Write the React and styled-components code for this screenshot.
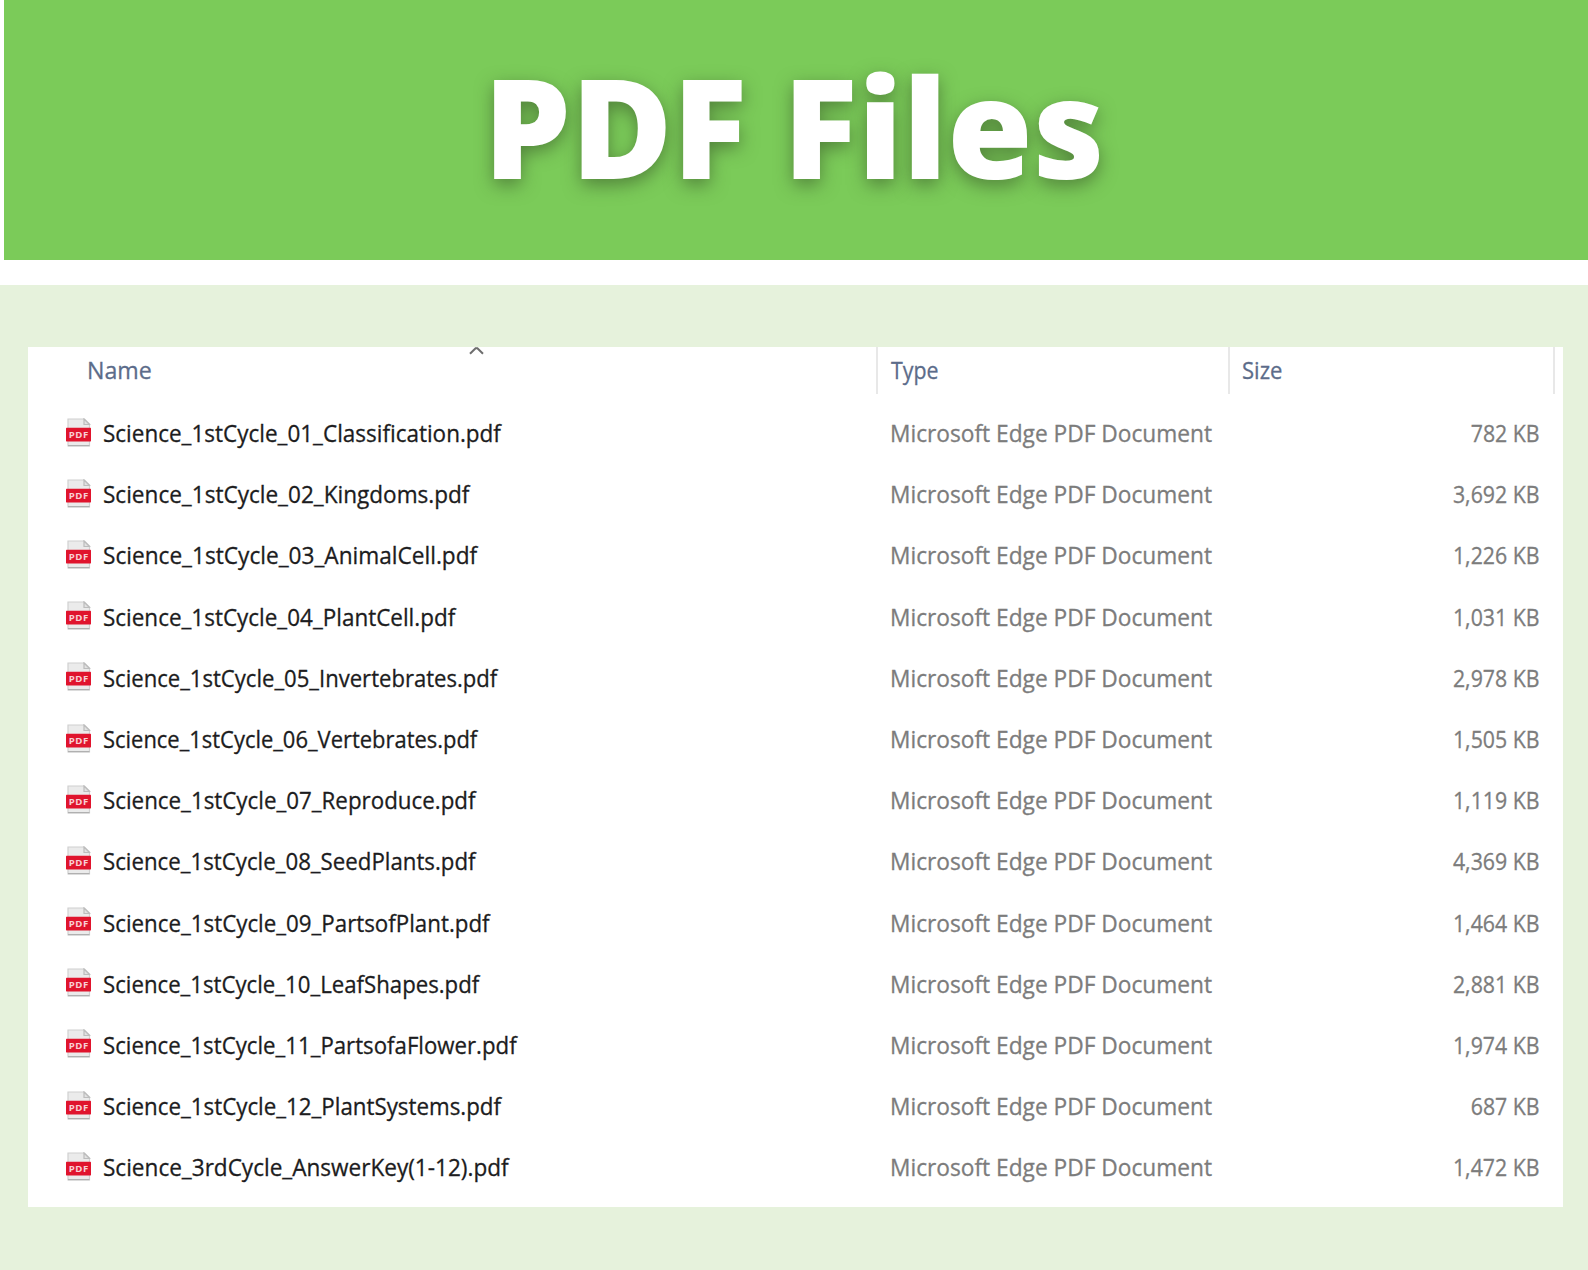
import React from "react";
import styled, { createGlobalStyle } from "styled-components";

const GlobalStyle = createGlobalStyle`
  body {
    margin: 0;
    background-color: #fff;
    font-family: "Open Sans", "Noto Sans", sans-serif;
  }
`;
const Page = styled.div`
  display: flex;
  flex-direction: column;
  width: 1588px;
  height: 1270px;
  overflow: hidden;
`;
const Banner = styled.header`
  display: flex;
  justify-content: center;
  box-sizing: border-box;
  height: 260px;
  margin-left: 4px;
  padding: 56px 4px 0 0;
  background-color: #7bcb59;
`;
const Title = styled.h1`
  margin: 0;
  color: #fff;
  font-size: 138.4px;
  font-weight: 800;
  line-height: 139px;
  white-space: nowrap;
  text-shadow: 0 6px 18px rgba(50, 75, 35, 0.56);
`;
const Content = styled.main`
  flex: 1;
  margin-top: 25px;
  padding: 62px 25px 0 28px;
  background-color: #e6f2dc;
`;
const Panel = styled.section`
  box-sizing: border-box;
  height: 860px;
  background-color: #fff;
`;
const Columns = styled.div`
  display: grid;
  grid-template-columns: 850px 352px 325px;
  height: 47px;
  margin-bottom: 8px;
`;
const Column = styled.div`
  display: flex;
  position: relative;
  box-sizing: border-box;
  padding: 6px 0 0 ${(p) => p.$indent}px;
  border-right: 2px solid #e8e8e8;
  color: #5c6c8a;
  font-size: 24px;
  line-height: 33px;
`;
const SortArrow = styled.svg`
  position: absolute;
  left: 440px;
  top: 0;
`;
const Row = styled.div`
  display: grid;
  grid-template-columns: 75px 787px 360.5px 289px;
  align-items: center;
  height: 61.2px;
  font-size: 24px;
  line-height: 33px;
`;
const Icon = styled.svg`
  display: block;
  margin: 0 0 1px 37px;
`;
const Text = styled.span`
  justify-self: ${(p) => (p.$right ? "end" : "start")};
  color: ${(p) => p.$color || "inherit"};
  white-space: nowrap;
  -webkit-text-stroke: 0.3px currentColor;
  transform: scaleX(${(p) => p.$stretch});
  transform-origin: ${(p) => (p.$right ? "right" : "left")};
`;

const files = [
  { name: "Science_1stCycle_01_Classification.pdf", size: "782 KB", stretch: 0.937 },
  { name: "Science_1stCycle_02_Kingdoms.pdf", size: "3,692 KB", stretch: 0.94 },
  { name: "Science_1stCycle_03_AnimalCell.pdf", size: "1,226 KB", stretch: 0.943 },
  { name: "Science_1stCycle_04_PlantCell.pdf", size: "1,031 KB", stretch: 0.936 },
  { name: "Science_1stCycle_05_Invertebrates.pdf", size: "2,978 KB", stretch: 0.92 },
  { name: "Science_1stCycle_06_Vertebrates.pdf", size: "1,505 KB", stretch: 0.914 },
  { name: "Science_1stCycle_07_Reproduce.pdf", size: "1,119 KB", stretch: 0.931 },
  { name: "Science_1stCycle_08_SeedPlants.pdf", size: "4,369 KB", stretch: 0.927 },
  { name: "Science_1stCycle_09_PartsofPlant.pdf", size: "1,464 KB", stretch: 0.93 },
  { name: "Science_1stCycle_10_LeafShapes.pdf", size: "2,881 KB", stretch: 0.925 },
  { name: "Science_1stCycle_11_PartsofaFlower.pdf", size: "1,974 KB", stretch: 0.926 },
  { name: "Science_1stCycle_12_PlantSystems.pdf", size: "687 KB", stretch: 0.93 },
  { name: "Science_3rdCycle_AnswerKey(1-12).pdf", size: "1,472 KB", stretch: 0.94 },
];

const PdfIcon = () => (
  <Icon width="27" height="29" viewBox="0 0 27 29">
    <path d="M3 1H19.5L24.5 6V28H3Z" fill="#ebebeb" stroke="#d0d0d0" strokeWidth="1.2" />
    <path d="M19 1V6.5H24.5Z" fill="#e2e2e2" stroke="#bcbcbc" strokeWidth="1.2" />
    <path d="M3 27.6H24.5" stroke="#b0b0b0" strokeWidth="1.2" />
    <rect x="1" y="9.8" width="25" height="13.6" rx="0.6" fill="#e0142d" />
    <text
      x="13.5"
      y="20"
      fill="#fff"
      fontSize="9.6"
      fontWeight="700"
      textAnchor="middle"
      textLength="19.5"
      opacity="0.8"
    >
      PDF
    </text>
  </Icon>
);

const App = () => {
  return (
    <Page>
      <GlobalStyle />
      <Banner>
        <Title>PDF Files</Title>
      </Banner>
      <Content>
        <Panel>
          <Columns>
            <Column $indent={58.5}>
              <Text $stretch={0.965}>Name</Text>
              <SortArrow width="18" height="8" viewBox="0 0 18 8">
                <path d="M2 6.8L7.6 1.2H9.4L15 6.8" fill="none" stroke="#6e6e6e" strokeWidth="2" />
              </SortArrow>
            </Column>
            <Column $indent={12.5}>
              <Text $stretch={0.89}>Type</Text>
            </Column>
            <Column $indent={11.5}>
              <Text $stretch={0.92}>Size</Text>
            </Column>
          </Columns>
          {files.map((file) => (
            <Row key={file.name}>
              <PdfIcon />
              <Text $stretch={file.stretch} $color="#1c1c20">{file.name}</Text>
              <Text $stretch={0.946} $color="#7c7c7c">Microsoft Edge PDF Document</Text>
              <Text $stretch={0.888} $color="#7c7c7c" $right>{file.size}</Text>
            </Row>
          ))}
        </Panel>
      </Content>
    </Page>
  );
};

export default App;
